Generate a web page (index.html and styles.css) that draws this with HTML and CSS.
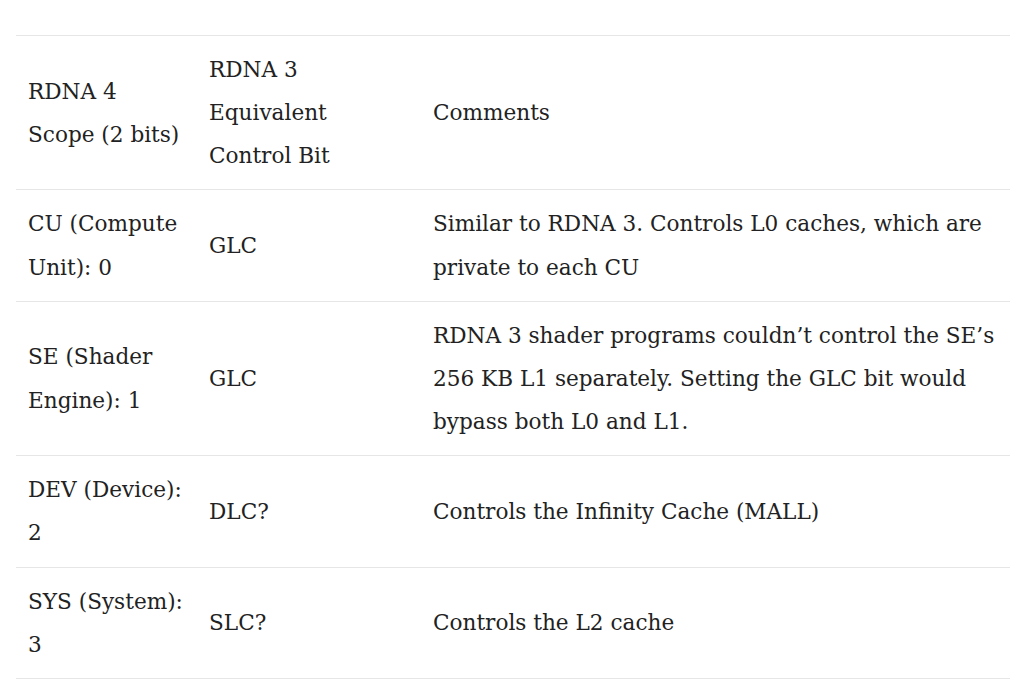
FILE: index.html
```html
<!DOCTYPE html>
<html>
<head>
<meta charset="utf-8">
<link rel="stylesheet" href="styles.css">
</head>
<body>
<div class="page">
<table class="scope-table">
  <colgroup>
    <col class="c1"><col class="c2"><col class="c3">
  </colgroup>
  <tbody>
    <tr>
      <td>RDNA 4 Scope (2 bits)</td>
      <td>RDNA 3 Equivalent Control Bit</td>
      <td>Comments</td>
    </tr>
    <tr>
      <td>CU (Compute Unit): 0</td>
      <td>GLC</td>
      <td>Similar to RDNA 3. Controls L0 caches, which are private to each CU</td>
    </tr>
    <tr>
      <td>SE (Shader Engine): 1</td>
      <td>GLC</td>
      <td>RDNA 3 shader programs couldn’t control the SE’s 256 KB L1 separately. Setting the GLC bit would bypass both L0 and L1.</td>
    </tr>
    <tr>
      <td>DEV (Device): 2</td>
      <td>DLC?</td>
      <td>Controls the Infinity Cache (MALL)</td>
    </tr>
    <tr>
      <td>SYS (System): 3</td>
      <td>SLC?</td>
      <td>Controls the L2 cache</td>
    </tr>
  </tbody>
</table>
</div>
</body>
</html>
```

FILE: styles.css
```css
html, body {
  margin: 0;
  padding: 0;
  background: #ffffff;
}
.page {
  padding: 35px 11px 0 16px;
}
.scope-table {
  width: 994px;
  border-collapse: collapse;
  table-layout: fixed;
  font-family: "Roboto Slab", "DejaVu Serif", serif;
  font-size: 21.6px;
  line-height: 43.15px;
  color: #222222;
}
.c1 { width: 181px; }
.c2 { width: 224px; }
.c3 { width: 589px; }
.scope-table td {
  padding: 12px 8px 12px 12px;
  vertical-align: middle;
  border-top: 1px solid #e6e6e6;
  border-bottom: 1px solid #e6e6e6;
}
```
